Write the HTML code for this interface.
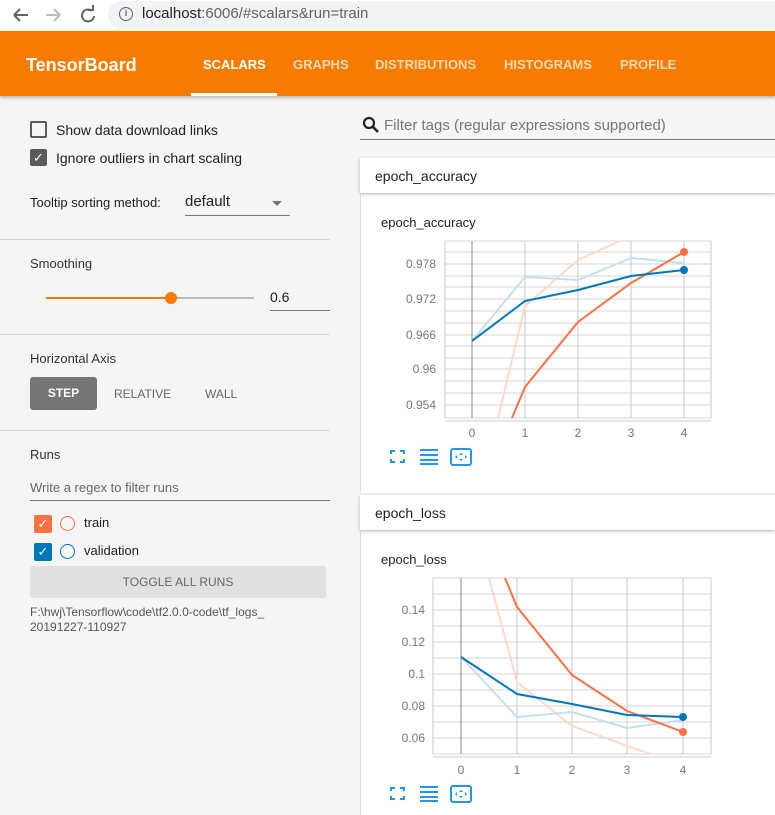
<!DOCTYPE html>
<html><head><meta charset="utf-8"><style>
*{box-sizing:border-box;margin:0;padding:0}
body{width:775px;height:815px;overflow:hidden;background:#f5f5f5;font-family:"Liberation Sans",sans-serif;position:relative;color:#212121}
.abs{position:absolute}
.bar{left:0;top:0;width:775px;height:31px;background:#fff}
.url{left:108px;top:1px;width:667px;height:28px;background:#f1f3f4;border-radius:14px 0 0 14px}
.top{left:0;top:31px;width:775px;height:65px;background:#f57c00;box-shadow:0 2px 3px rgba(0,0,0,.25)}
.tab{top:57px;font-size:13px;font-weight:bold;color:#ffd9b3}
.cb{width:17px;height:17px;border:2px solid #5a5a5a;border-radius:2px}
.t14{font-size:14px}
.hr{left:0;width:330px;height:1px;background:#d8d8d8}
.card{left:360px;width:415px;background:#fff;border-left:1px solid #ddd}
.hdr{left:360px;width:415px;height:35px;background:#fff;box-shadow:0 1px 3px rgba(0,0,0,.3);font-size:14px;padding:10px 0 0 15px}
</style></head><body>
<div class="abs bar"></div>
<svg class="abs" style="left:10px;top:5px" width="90" height="20" fill="none" stroke-width="2">
<path d="M4 10H18M4 10L10 4M4 10L10 16" stroke="#5f6368"/>
<path d="M36 10H50M50 10L44 4M50 10L44 16" stroke="#bbb"/>
<path d="M82 6A6 6 0 1 0 84 11" stroke="#5f6368"/><path d="M78 5L83 5L83 0" stroke="#5f6368"/>
</svg>
<div class="abs url"></div>
<div class="abs" style="left:119px;top:7px;width:14px;height:14px;border:1.6px solid #5f6368;border-radius:50%;font-size:9px;text-align:center;line-height:11px;color:#5f6368;font-weight:bold">i</div>
<div class="abs" style="left:142px;top:5px;font-size:15px;color:#202124">localhost<span style="color:#5f6368">:6006/#scalars&amp;run=train</span></div>
<div class="abs top"></div>
<div class="abs" style="left:26px;top:55px;font-size:18px;font-weight:bold;color:#fff">TensorBoard</div>
<div class="abs tab" style="left:203px;color:#fff">SCALARS</div>
<div class="abs" style="left:191px;top:93px;width:86px;height:3px;background:#fff"></div>
<div class="abs tab" style="left:293px">GRAPHS</div>
<div class="abs tab" style="left:375px">DISTRIBUTIONS</div>
<div class="abs tab" style="left:504px">HISTOGRAMS</div>
<div class="abs tab" style="left:620px">PROFILE</div>

<div class="abs cb" style="left:30px;top:121px"></div>
<div class="abs t14" style="left:56px;top:122px">Show data download links</div>
<div class="abs cb" style="left:30px;top:149px;background:#5a5a5a;color:#fff;font-size:13px;line-height:13px;text-align:center">&#10003;</div>
<div class="abs t14" style="left:56px;top:150px">Ignore outliers in chart scaling</div>
<div class="abs" style="left:30px;top:195px;font-size:13px">Tooltip sorting method:</div>
<div class="abs t14" style="left:185px;top:193px;font-size:15px">default</div>
<div class="abs" style="left:272px;top:201px;width:0;height:0;border:5px solid transparent;border-top-color:#777"></div>
<div class="abs" style="left:185px;top:215px;width:105px;height:1px;background:#777"></div>
<div class="abs hr" style="top:239px"></div>
<div class="abs" style="left:30px;top:256px;font-size:13px;color:#333">Smoothing</div>
<div class="abs" style="left:46px;top:297px;width:125px;height:2px;background:#f57c00"></div>
<div class="abs" style="left:171px;top:297px;width:83px;height:2px;background:#bbb"></div>
<div class="abs" style="left:165px;top:292px;width:12px;height:12px;border-radius:50%;background:#f57c00"></div>
<div class="abs t14" style="left:270px;top:289px">0.6</div>
<div class="abs" style="left:270px;top:310px;width:60px;height:1px;background:#777"></div>
<div class="abs hr" style="top:334px"></div>
<div class="abs" style="left:30px;top:351px;font-size:13px;color:#333">Horizontal Axis</div>
<div class="abs" style="left:30px;top:377px;width:67px;height:33px;background:#757575;border-radius:3px;color:#fff;font-size:12px;font-weight:bold;text-align:center;line-height:33px">STEP</div>
<div class="abs" style="left:114px;top:387px;font-size:12px;color:#666">RELATIVE</div>
<div class="abs" style="left:205px;top:387px;font-size:12px;color:#666">WALL</div>
<div class="abs hr" style="top:430px"></div>
<div class="abs" style="left:30px;top:447px;font-size:13px;color:#333">Runs</div>
<div class="abs" style="left:30px;top:480px;font-size:13px;color:#666">Write a regex to filter runs</div>
<div class="abs" style="left:30px;top:500px;width:300px;height:1px;background:#777"></div>
<div class="abs" style="left:34px;top:515px;width:18px;height:18px;background:#ff7043;border-radius:2px;color:#fff;font-size:13px;line-height:18px;text-align:center">&#10003;</div>
<div class="abs" style="left:60px;top:516px;width:15px;height:15px;border:1.6px solid #ff7043;border-radius:50%"></div>
<div class="abs" style="left:84px;top:515px;font-size:13px">train</div>
<div class="abs" style="left:34px;top:543px;width:18px;height:18px;background:#0077bb;border-radius:2px;color:#fff;font-size:13px;line-height:18px;text-align:center">&#10003;</div>
<div class="abs" style="left:60px;top:544px;width:15px;height:15px;border:1.6px solid #0077bb;border-radius:50%"></div>
<div class="abs" style="left:84px;top:543px;font-size:13px">validation</div>
<div class="abs" style="left:30px;top:566px;width:296px;height:32px;background:#e0e0e0;border-radius:3px;color:#666;font-size:12px;text-align:center;line-height:32px">TOGGLE ALL RUNS</div>
<div class="abs" style="left:30px;top:605px;font-size:12px;color:#555;line-height:15px">F:\hwj\Tensorflow\code\tf2.0.0-code\tf_logs_<br>20191227-110927</div>

<svg class="abs" style="left:362px;top:116px" width="18" height="18"><circle cx="7" cy="7" r="5" fill="none" stroke="#222" stroke-width="2.2"/><path d="M10.5 10.5L16 16" stroke="#222" stroke-width="2.6"/></svg>
<div class="abs" style="left:384px;top:117px;font-size:15px;color:#777">Filter tags (regular expressions supported)</div>
<div class="abs" style="left:360px;top:139px;width:415px;height:1px;background:#777"></div>

<div class="abs card" style="top:193px;height:300px"></div>
<div class="abs hdr" style="top:158px">epoch_accuracy</div>
<div class="abs card" style="top:530px;height:285px"></div>
<div class="abs hdr" style="top:495px">epoch_loss</div>

<svg class="abs" style="left:0;top:0" width="775" height="815" font-family="Liberation Sans" font-size="12" fill="#777">
<text x="381" y="227" font-size="13" fill="#212121">epoch_accuracy</text>
<g stroke="#d6d6d6" stroke-width="1">
<path d="M445 241H711M445 252H711M445 264H711M445 276H711M445 287H711M445 299H711M445 311H711M445 323H711M445 335H711M445 346H711M445 358H711M445 369H711M445 381H711M445 393H711M445 405H711M445 418H711"/>
<path d="M445 241V418M525 241V418M578 241V418M631 241V418M684 241V418M711 241V418" stroke="#c8c8c8"/>
</g>
<path d="M472 241V418" stroke="#888"/>
<path d="M445 421H711" stroke="#ccc"/>
<g text-anchor="end"><text x="436" y="268">0.978</text><text x="436" y="303">0.972</text><text x="436" y="339">0.966</text><text x="436" y="373">0.96</text><text x="436" y="409">0.954</text></g>
<g text-anchor="middle"><text x="472" y="437">0</text><text x="525" y="437">1</text><text x="578" y="437">2</text><text x="631" y="437">3</text><text x="684" y="437">4</text></g>
<g fill="none" stroke-width="2">
<path d="M498 418L525 306L578 260L620 241" stroke="#ffd8cc"/>
<path d="M472 341L525 277L578 280L631 258L684 263" stroke="#c6dfee"/>
<path d="M512 418L525 387L578 322L631 283L684 252" stroke="#ff7043"/>
<path d="M472 341L525 301L578 290L631 276L684 270" stroke="#0077bb"/>
</g>
<circle cx="684" cy="252" r="4" fill="#ff7043"/><circle cx="684" cy="270" r="4" fill="#0077bb"/>

<text x="381" y="564" font-size="13" fill="#212121">epoch_loss</text>
<g stroke="#d6d6d6" stroke-width="1">
<path d="M433 578H711M433 594H711M433 610H711M433 626H711M433 642H711M433 658H711M433 674H711M433 690H711M433 706H711M433 722H711M433 738H711M433 754H711"/>
<path d="M433 578V754M517 578V754M572 578V754M627 578V754M683 578V754M711 578V754" stroke="#c8c8c8"/>
</g>
<path d="M461 578V754" stroke="#888"/>
<path d="M433 757H711" stroke="#ccc"/>
<g text-anchor="end"><text x="425" y="614">0.14</text><text x="425" y="646">0.12</text><text x="425" y="678">0.1</text><text x="425" y="710">0.08</text><text x="425" y="742">0.06</text></g>
<g text-anchor="middle"><text x="461" y="774">0</text><text x="517" y="774">1</text><text x="572" y="774">2</text><text x="627" y="774">3</text><text x="683" y="774">4</text></g>
<g fill="none" stroke-width="2">
<path d="M489 578L517 682L572 726L650 754" stroke="#ffd8cc"/>
<path d="M461 657L517 717L572 712L627 728L683 720" stroke="#c6dfee"/>
<path d="M505 578L517 607L572 675L627 711L683 732" stroke="#ff7043"/>
<path d="M461 657L517 694L572 704L627 715L683 717" stroke="#0077bb"/>
</g>
<circle cx="683" cy="732" r="4" fill="#ff7043"/><circle cx="683" cy="717" r="4" fill="#0077bb"/>

<g fill="none" stroke="#2196f3" stroke-width="2">
<path d="M391 454V451H395M400 451H404V454M404 459V462H400M395 462H391V459"/>
<path d="M420 450H438M420 455H438M420 460H438M420 464H438"/>
<rect x="451" y="449" width="20" height="16" rx="2"/>
<path d="M391 791V788H395M400 788H404V791M404 796V799H400M395 799H391V796"/>
<path d="M420 787H438M420 792H438M420 797H438M420 801H438"/>
<rect x="451" y="786" width="20" height="16" rx="2"/>
</g>
<g fill="#2196f3"><path d="M461 453l2 2h-4zM461 461l2-2h-4zM455 457l2-2v4zM467 457l-2-2v4z"/><path d="M461 790l2 2h-4zM461 798l2-2h-4zM455 794l2-2v4zM467 794l-2-2v4z"/></g>
</svg>
</body></html>
